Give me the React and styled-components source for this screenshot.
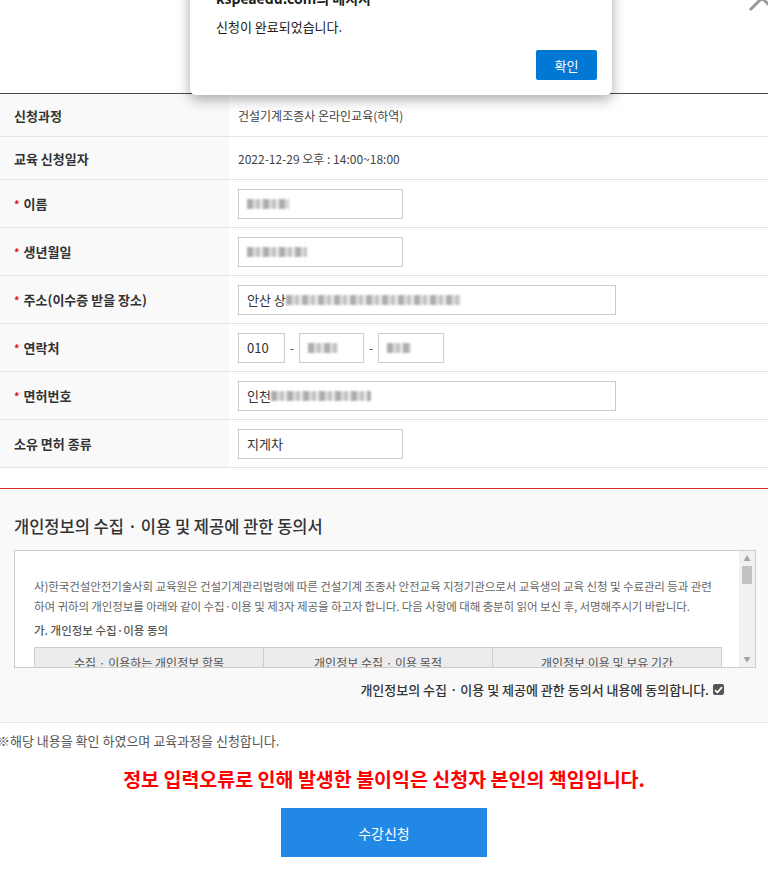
import React from 'react';
import styled, { createGlobalStyle } from 'styled-components';

const font = `"Noto Sans CJK KR", "Noto Sans", "Liberation Sans", sans-serif`;

const GlobalStyle = createGlobalStyle`
  html, body {
    margin: 0;
    padding: 0;
    background: #fff;
    font-family: ${font};
    color: #333;
  }
  * { box-sizing: border-box; }
`;

const Page = styled.div`
  position: relative;
  width: 768px;
  height: 870px;
  overflow: hidden;
`;

const TopBar = styled.div`
  height: 94px;
  border-bottom: 1px solid #4a4a4a;
`;

const CloseMark = styled.svg`
  position: absolute;
  top: -8px;
  right: -6px;
`;

const Dialog = styled.div`
  position: absolute;
  left: 190px;
  top: -20px;
  width: 422px;
  height: 115px;
  background: #fff;
  border-radius: 0 0 6px 6px;
  box-shadow: 0 4px 14px rgba(0, 0, 0, 0.35);
  padding: 8px 15px 0 26px;
  z-index: 5;
`;

const DialogTitle = styled.div`
  font-size: 14px;
  font-weight: 700;
  color: #202020;
  line-height: 20px;
`;

const DialogText = styled.div`
  font-size: 13px;
  color: #202020;
  margin-top: 10px;
  line-height: 18px;
`;

const DialogActions = styled.div`
  display: flex;
  justify-content: flex-end;
  margin-top: 14px;
`;

const OkButton = styled.button`
  width: 61px;
  height: 30px;
  border: none;
  border-radius: 2px;
  background: #0078d4;
  color: #fff;
  font-family: ${font};
  font-size: 13px;
`;

const Row = styled.div`
  display: grid;
  grid-template-columns: 229px 1fr;
  height: ${p => (p.tall ? 48 : 43)}px;
  border-bottom: 1px solid #e4e4e4;
`;

const Label = styled.div`
  background: #f9f9f9;
  display: flex;
  align-items: center;
  padding-left: 14px;
  font-size: 13px;
  font-weight: 700;
  color: #333;
`;

const Star = styled.span`
  color: #e02020;
  font-size: 11px;
  margin-right: 4px;
`;

const Value = styled.div`
  display: flex;
  align-items: center;
  padding-left: 9px;
  font-size: 12px;
  color: #444;
  gap: 4px;
`;

const Field = styled.div`
  width: ${p => p.w}px;
  height: 30px;
  border: 1px solid #ccc;
  background: #fff;
  display: flex;
  align-items: center;
  padding-left: 8px;
  font-size: 13px;
  color: #333;
  white-space: nowrap;
  overflow: hidden;
`;

const Blur = styled.span`
  display: inline-block;
  width: ${p => p.w}px;
  height: 10px;
  background: repeating-linear-gradient(90deg, #999 0 6px, #d6d6d6 6px 9px, #b5b5b5 9px 13px, #e6e6e6 13px 16px);
  filter: blur(1.2px);
  opacity: 0.8;
`;

const Dash = styled.span`
  font-size: 12px;
  color: #444;
  width: 6px;
  text-align: center;
`;

const Spacer = styled.div`
  height: 21px;
  border-bottom: 1px solid #d92b2b;
`;

const Agree = styled.section`
  background: #f9f9f9;
  padding: 25px 12px 0 14px;
  height: 234px;
  border-bottom: 1px solid #e6e6e6;
`;

const AgreeTitle = styled.h3`
  margin: 0;
  font-size: 16.5px;
  font-weight: 500;
  color: #333;
  line-height: 24px;
`;

const TermsBox = styled.div`
  margin-top: 12px;
  height: 118px;
  background: #fff;
  border: 1px solid #ccc;
  display: flex;
`;

const TermsContent = styled.div`
  flex: 1;
  overflow: hidden;
  padding: 25px 17px 0 19px;
  font-size: 11.5px;
  color: #666;
  line-height: 20px;
`;

const ScrollBar = styled.div`
  width: 16px;
  background: #f1f1f1;
  display: flex;
  flex-direction: column;
  align-items: center;
  font-size: 7px;
  color: #a3a3a3;
`;

const Arrow = styled.div`
  height: 15px;
  line-height: 15px;
`;

const Thumb = styled.div`
  width: 10px;
  height: 18px;
  background: #c1c1c1;
`;

const Fill = styled.div`
  flex: 1;
`;

const Para = styled.p`
  margin: 0;
  letter-spacing: -0.1px;
  word-break: break-all;
`;

const Sub = styled.p`
  margin: 4px 0 7px;
  font-weight: 500;
  color: #555;
`;

const Terms = styled.table`
  width: 100%;
  border-collapse: collapse;
  table-layout: fixed;
  font-size: 12px;
`;

const Th = styled.th`
  background: #ececec;
  border: 1px solid #ccc;
  font-weight: 400;
  color: #555;
  height: 30px;
`;

const Td = styled.td`
  border: 1px solid #ccc;
  padding: 6px;
  color: #666;
`;

const Consent = styled.label`
  display: flex;
  justify-content: flex-end;
  align-items: center;
  gap: 4px;
  margin-top: 12px;
  padding-right: 32px;
  font-size: 13px;
  font-weight: 500;
  color: #333;
`;

const Check = styled.span`
  width: 11px;
  height: 11px;
  background: #555;
  border-radius: 2px;
  display: inline-flex;
  align-items: center;
  justify-content: center;
`;

const Footer = styled.div`
  display: flex;
  flex-direction: column;
  align-items: center;
`;

const Note = styled.p`
  align-self: flex-start;
  margin: 8px 0 0 -3px;
  font-size: 13px;
  color: #555;
  line-height: 20px;
`;

const Warning = styled.p`
  margin: 15px 0 0;
  font-size: 19.5px;
  font-weight: 700;
  color: #ff0000;
  line-height: 26px;
`;

const Submit = styled.button`
  margin-top: 16px;
  width: 206px;
  height: 49px;
  border: none;
  background: #2189e5;
  color: #fff;
  font-family: ${font};
  font-size: 14px;
`;

export default function App() {
  return (
    <Page>
      <GlobalStyle />
      <TopBar />
      <CloseMark width="28" height="22" viewBox="0 0 28 22">
        <path d="M4 18 L16 6 M16 6 L28 18" stroke="#9a9a9a" strokeWidth="3" fill="none" />
      </CloseMark>
      <Dialog>
        <DialogTitle>kspeaedu.com의 메시지</DialogTitle>
        <DialogText>신청이 완료되었습니다.</DialogText>
        <DialogActions>
          <OkButton>확인</OkButton>
        </DialogActions>
      </Dialog>

      <Row>
        <Label>신청과정</Label>
        <Value>건설기계조종사 온라인교육(하역)</Value>
      </Row>
      <Row>
        <Label>교육 신청일자</Label>
        <Value>2022-12-29 오후 : 14:00~18:00</Value>
      </Row>
      <Row tall>
        <Label><Star>*</Star>이름</Label>
        <Value><Field w={165}><Blur w={42} /></Field></Value>
      </Row>
      <Row tall>
        <Label><Star>*</Star>생년월일</Label>
        <Value><Field w={165}><Blur w={60} /></Field></Value>
      </Row>
      <Row tall>
        <Label><Star>*</Star>주소(이수증 받을 장소)</Label>
        <Value><Field w={378}>안산 상<Blur w={175} /></Field></Value>
      </Row>
      <Row tall>
        <Label><Star>*</Star>연락처</Label>
        <Value>
          <Field w={47}>010</Field>
          <Dash>-</Dash>
          <Field w={65}><Blur w={30} /></Field>
          <Dash>-</Dash>
          <Field w={66}><Blur w={24} /></Field>
        </Value>
      </Row>
      <Row tall>
        <Label><Star>*</Star>면허번호</Label>
        <Value><Field w={378}>인천<Blur w={100} /></Field></Value>
      </Row>
      <Row tall>
        <Label>소유 면허 종류</Label>
        <Value><Field w={165}>지게차</Field></Value>
      </Row>

      <Spacer />

      <Agree>
        <AgreeTitle>개인정보의 수집 · 이용 및 제공에 관한 동의서</AgreeTitle>
        <TermsBox>
          <TermsContent>
            <Para>
              사)한국건설안전기술사회 교육원은 건설기계관리법령에 따른 건설기계 조종사 안전교육 지정기관으로서 교육생의 교육 신청 및 수료관리 등과 관련하여 귀하의 개인정보를 아래와 같이 수집·이용 및 제3자 제공을 하고자 합니다. 다음 사항에 대해 충분히 읽어 보신 후, 서명해주시기 바랍니다.
            </Para>
            <Sub>가. 개인정보 수집·이용 동의</Sub>
            <Terms>
              <thead>
                <tr>
                  <Th>수집 · 이용하는 개인정보 항목</Th>
                  <Th>개인정보 수집 · 이용 목적</Th>
                  <Th>개인정보 이용 및 보유 기간</Th>
                </tr>
              </thead>
              <tbody>
                <tr>
                  <Td>성명, 생년월일, 주소, 연락처, 면허번호</Td>
                  <Td>교육 신청 및 수료 관리</Td>
                  <Td>교육 수료 후 3년</Td>
                </tr>
              </tbody>
            </Terms>
          </TermsContent>
          <ScrollBar>
            <Arrow>▲</Arrow>
            <Thumb />
            <Fill />
            <Arrow>▼</Arrow>
          </ScrollBar>
        </TermsBox>
        <Consent>
          개인정보의 수집 · 이용 및 제공에 관한 동의서 내용에 동의합니다.
          <Check>
            <svg width="9" height="8" viewBox="0 0 9 8">
              <path d="M1 4.2 L3.4 6.5 L8 1.2" stroke="#fff" strokeWidth="1.8" fill="none" />
            </svg>
          </Check>
        </Consent>
      </Agree>

      <Footer>
        <Note>※해당 내용을 확인 하였으며 교육과정을 신청합니다.</Note>
        <Warning>정보 입력오류로 인해 발생한 불이익은 신청자 본인의 책임입니다.</Warning>
        <Submit>수강신청</Submit>
      </Footer>
    </Page>
  );
}
